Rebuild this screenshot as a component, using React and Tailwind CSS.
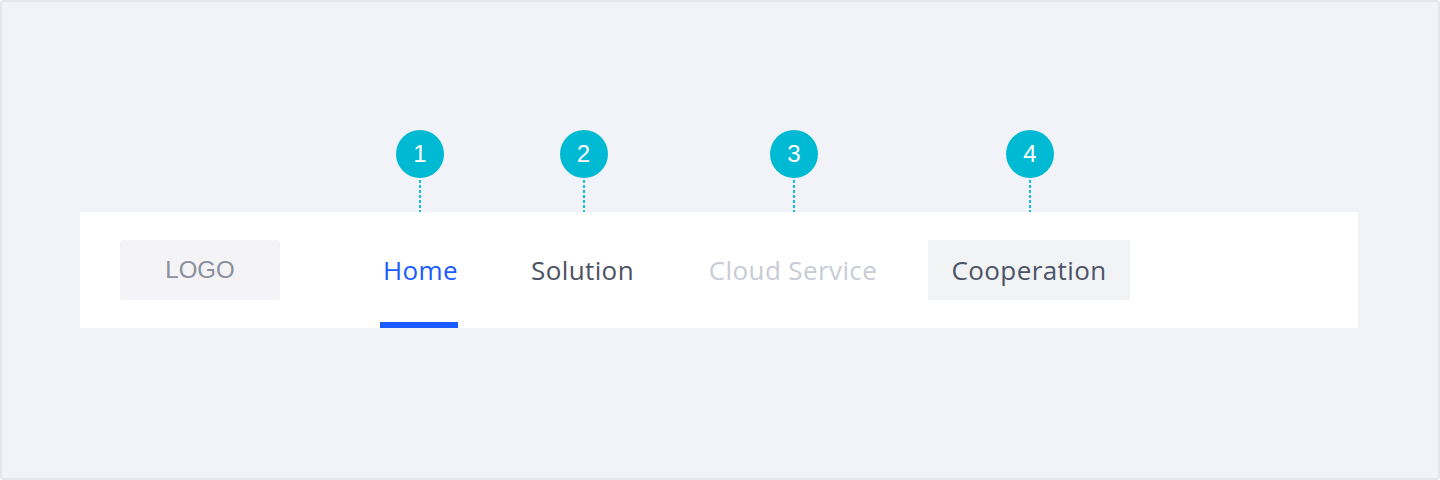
import React from "react";

const Badge = ({ n }) => (
  <div className="pointer-events-none absolute bottom-full left-[calc(50%+1px)] flex -translate-x-1/2 flex-col items-center">
    <div className="flex h-12 w-12 items-center justify-center rounded-full bg-[#00b9d3] text-[24px] leading-none text-white font-['Liberation_Sans',sans-serif]">
      {n}
    </div>
    <svg width="2" height="34" className="block">
      <line x1="1" y1="2" x2="1" y2="34" stroke="#12bdd6" strokeWidth="2" strokeDasharray="3 2" />
    </svg>
  </div>
);

const NavItem = ({ n, children, className = "", active }) => (
  <div className={`relative flex h-full items-center justify-center ${className}`}>
    <Badge n={n} />
    {children}
    {active && <div className="absolute inset-x-0 bottom-0 h-[6px] bg-[#1a5cff]" />}
  </div>
);

const App = () => {
  return (
    <div className="h-[480px] w-full rounded border-2 border-[#e4e7ee] bg-[#f2f3f8] pt-[210px] font-['Open_Sans',sans-serif]">
      <div className="ml-[78px] flex h-[116px] w-[1278px] items-stretch bg-white pl-10">
        <div className="flex h-[60px] w-[160px] items-center justify-center self-center rounded bg-[#f4f4f6] text-[24px] text-[#8a909e] font-['Liberation_Sans',sans-serif]">
          LOGO
        </div>
        <nav className="ml-[100px] flex h-full items-stretch text-[26px] tracking-[0.4px]">
          <NavItem n="1" active className="w-[78px] text-[#1a5cff]">
            <span className="pl-[3px]">Home</span>
          </NavItem>
          <NavItem n="2" className="ml-[73px] w-[103px] text-[#4b5263]">
            Solution
          </NavItem>
          <NavItem n="3" className="ml-[73px] w-[172px] text-[#c8ccd6]">
            Cloud Service
          </NavItem>
          <NavItem n="4" className="ml-[49px] w-[202px]">
            <div className="flex h-[60px] w-full items-center justify-center bg-[#f2f3f5] text-[#4b5468]">
              Cooperation
            </div>
          </NavItem>
        </nav>
      </div>
    </div>
  );
};

export default App;
